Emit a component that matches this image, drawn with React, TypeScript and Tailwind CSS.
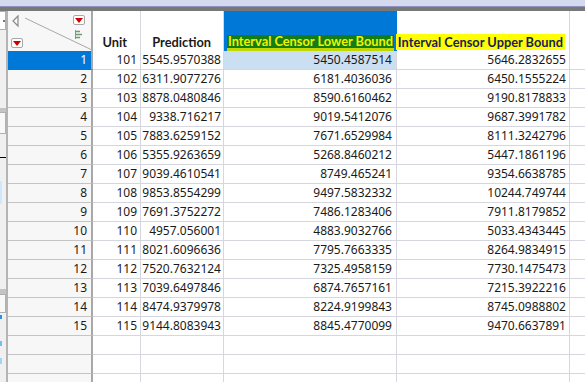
import React from 'react';

const rows: [number, number, string, string, string][] = [
  [1, 101, '5545.9570388', '5450.4587514', '5646.2832655'],
  [2, 102, '6311.9077276', '6181.4036036', '6450.1555224'],
  [3, 103, '8878.0480846', '8590.6160462', '9190.8178833'],
  [4, 104, '9338.716217', '9019.5412076', '9687.3991782'],
  [5, 105, '7883.6259152', '7671.6529984', '8111.3242796'],
  [6, 106, '5355.9263659', '5268.8460212', '5447.1861196'],
  [7, 107, '9039.4610541', '8749.465241', '9354.6638785'],
  [8, 108, '9853.8554299', '9497.5832332', '10244.749744'],
  [9, 109, '7691.3752272', '7486.1283406', '7911.8179852'],
  [10, 110, '4957.056001', '4883.9032766', '5033.4343445'],
  [11, 111, '8021.6096636', '7795.7663335', '8264.9834915'],
  [12, 112, '7520.7632124', '7325.4958159', '7730.1475473'],
  [13, 113, '7039.6497846', '6874.7657161', '7215.3922216'],
  [14, 114, '8474.9379978', '8224.9199843', '8745.0988802'],
  [15, 115, '9144.8083943', '8845.4770099', '9470.6637891'],
];

const DropButton = () => (
  <div className="w-[12px] h-[10px] bg-white border border-[#a8a8a8] rounded-[2px] flex items-center justify-center">
    <svg width="8" height="5" viewBox="0 0 8 5">
      <path d="M0 0 L8 0 L4 5 Z" fill="#d00000" />
    </svg>
  </div>
);

const Corner = () => (
  <div className="relative w-[85px] h-[40px] shrink-0 bg-[#f7f7f7] border-r-2 border-[#a8a8a8]">
    <svg className="absolute left-0 top-0" width="85" height="40" viewBox="0 0 85 40">
      <path d="M10 5 L5 10 L10 15 Z" fill="none" stroke="#8a8a8a" strokeWidth="1.2" />
      <line x1="17" y1="7" x2="84" y2="39" stroke="#a8a8a8" strokeWidth="1" />
      <line x1="67.5" y1="19" x2="67.5" y2="28" stroke="#7a9a9a" strokeWidth="1" />
      <line x1="68" y1="20.5" x2="72" y2="20.5" stroke="#6f9b6f" strokeWidth="1.5" />
      <line x1="68" y1="23.5" x2="74" y2="23.5" stroke="#6f9b6f" strokeWidth="1.5" />
      <line x1="68" y1="26.5" x2="72" y2="26.5" stroke="#6f9b6f" strokeWidth="1.5" />
    </svg>
    <div className="absolute left-[65px] top-[4px]">
      <DropButton />
    </div>
    <div className="absolute left-[3px] top-[27px]">
      <DropButton />
    </div>
  </div>
);

const LeftStrip = () => (
  <div className="w-[6px] shrink-0 bg-[#f0f0f0] flex flex-col">
    <div className="h-[19px] bg-white border-r border-y border-[#b0b0b0] flex items-center justify-end">
      <div className="w-[2px] h-[2px] bg-[#777]" />
    </div>
    <div className="h-[78px]" />
    <div className="h-[4px] bg-[#c4c4c4]" />
    <div className="h-[22px] bg-[#f8f8f8] border-r border-y border-[#b0b0b0]" />
    <div className="h-[23px]" />
    <div className="h-px bg-black" />
    <div className="h-[23px]" />
    <div className="h-[23px] w-[2px] bg-[#cde8ff]" />
    <div className="h-[85px]" />
    <div className="h-[5px] bg-[#c4c4c4]" />
    <div className="h-[19px] bg-[#f8f8f8] border-r border-y border-[#b0b0b0]" />
    <div className="h-[4px] w-[2px] bg-[#2f8fe8] mt-[2px]" />
    <div className="h-[5px] w-[2px] bg-[#6cc4f0] mt-[22px]" />
    <div className="h-[6px] w-[2px] bg-[#9ad8f4] mt-[12px]" />
  </div>
);

export default function App() {
  const cell = 'h-[19px] shrink-0 border-r border-b border-[#d6d6e0] flex items-center justify-end';
  const head = "font-['Lato',sans-serif] font-bold text-[12.8px]";
  const blanks = [0, 1, 2];
  return (
    <div className="w-[585px] h-[382px] overflow-hidden bg-white text-[12px] text-[#1a1a1a] font-['Noto_Sans',sans-serif] flex flex-col">
      <div className="h-[6px] shrink-0 bg-[#d5d9ee]" />
      <div className="h-px shrink-0 bg-[#8c92bd]" />
      <div className="h-[4px] shrink-0 bg-[#787878]" />
      <div className="flex flex-1 min-h-0">
        <LeftStrip />
        <div className="w-[2px] shrink-0 bg-[#b4b4b4]" />
        <div className="flex flex-col flex-1 min-w-0">
          {/* Header */}
          <div className="flex h-[40px] shrink-0">
            <Corner />
            <div className={`w-[48px] shrink-0 border-r border-[#d6d6e0] flex items-end justify-end pr-[13px] pb-[1px] leading-[16px] ${head}`}>
              Unit
            </div>
            <div className={`w-[83px] shrink-0 border-r border-[#d6d6e0] flex items-end justify-end pr-[12px] pb-[1px] leading-[16px] ${head}`}>
              Prediction
            </div>
            <div className="w-[173px] shrink-0 bg-[#0078d7] flex items-end justify-end pr-[3px]">
              <span className={`bg-[#157d15] text-[#eef400] px-[1px] leading-[13px] border-b-[3px] border-[#c2d800] whitespace-nowrap ${head}`}>
                Interval Censor Lower Bound
              </span>
            </div>
            <div className="w-[173px] shrink-0 border-r border-[#d6d6e0] flex items-end justify-end pr-[4px]">
              <span className={`bg-[#ffff00] text-[#1c1c5a] px-[2px] mb-px leading-[16px] whitespace-nowrap ${head}`}>
                Interval Censor Upper Bound
              </span>
            </div>
            <div className="flex-1" />
          </div>

          {/* Rows */}
          {rows.map(([n, unit, pred, lo, hi]) => {
            const sel = n === 1;
            return (
              <div key={n} className="flex shrink-0">
                <div
                  className={`w-[85px] h-[19px] shrink-0 border-r-2 border-r-[#a8a8a8] border-b flex items-center justify-end pr-[4px] ${
                    sel ? 'bg-[#0078d7] text-white border-b-[#0078d7]' : 'bg-[#f7f7f7] border-b-[#c4c4c4]'
                  }`}
                >
                  {n}
                </div>
                <div className={`${cell} w-[48px] pr-[3px]`}>{unit}</div>
                <div className={`${cell} w-[83px] pr-[2px]`}>{pred}</div>
                <div className={`${cell} w-[173px] pr-[4px] ${sel ? 'bg-[#cbdff2]' : ''}`}>{lo}</div>
                <div className={`${cell} w-[173px] pr-[3px]`}>{hi}</div>
                <div className="h-[19px] flex-1 border-b border-[#d6d6e0]" />
              </div>
            );
          })}
          {blanks.map((b) => (
            <div key={b} className="flex shrink-0">
              <div className="w-[85px] h-[19px] shrink-0 border-r-2 border-r-[#a8a8a8] border-b border-b-[#c4c4c4] bg-[#f7f7f7]" />
              <div className={`${cell} w-[48px]`} />
              <div className={`${cell} w-[83px]`} />
              <div className={`${cell} w-[173px]`} />
              <div className={`${cell} w-[173px]`} />
              <div className="h-[19px] flex-1 border-b border-[#d6d6e0]" />
            </div>
          ))}
        </div>
      </div>
    </div>
  );
}
